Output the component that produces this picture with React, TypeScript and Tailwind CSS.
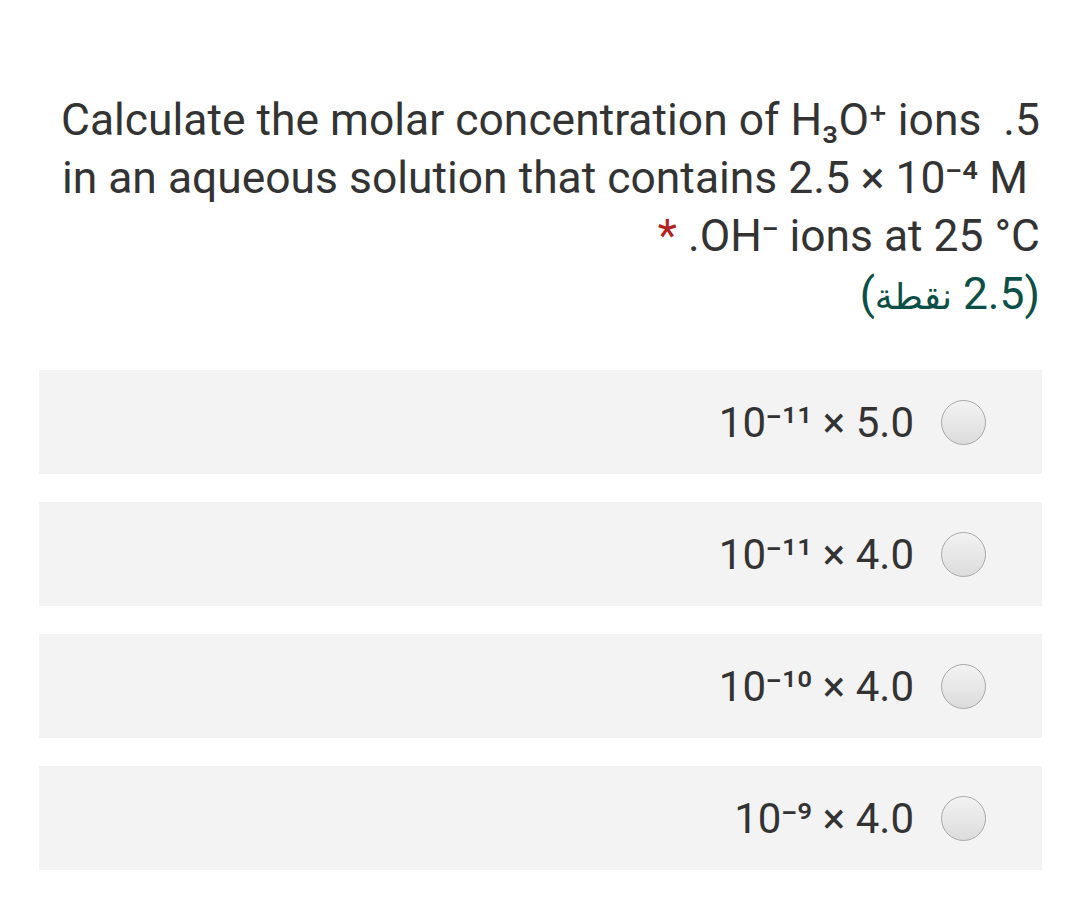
import React from 'react'

const OPTIONS = [
  { base: '10', exp: '⁻¹¹', rest: ' × 5.0' },
  { base: '10', exp: '⁻¹¹', rest: ' × 4.0' },
  { base: '10', exp: '⁻¹⁰', rest: ' × 4.0' },
  { base: '10', exp: '⁻⁹', rest: ' × 4.0' },
]

function Radio() {
  return (
    <span className="block w-[45px] h-[45px] rounded-full border border-[#a9a9a9] bg-gradient-to-b from-[#f3f3f3] to-[#dcdcdc] shrink-0" />
  )
}

export default function App() {
  return (
    <div
      className="bg-white w-[1080px] h-[897px] text-[#333333]"
      style={{ fontFamily: 'Roboto, "DejaVu Sans", sans-serif' }}
    >
      <div className="pt-[91px] pl-[39px] pr-[38px]">
        <div className="text-right text-[44.4px] leading-[58px] pr-[2px] whitespace-nowrap">
          <div>Calculate the molar concentration of H₃O⁺ ions&nbsp; .5</div>
          <div className="pr-[12px]">in an aqueous solution that contains 2.5 × 10⁻⁴ M</div>
          <div>
            <span className="text-[#b3211f]">*</span> .OH⁻ ions at 25 °C
          </div>
          <div className="text-[#0b4f47] h-[58px]" dir="rtl">
            (2.5 <span className="text-[36px] leading-none">نقطة</span>)
          </div>
        </div>

        <div className="mt-[47px] flex flex-col gap-[28px]">
          {OPTIONS.map((o, i) => (
            <div
              key={i}
              className="h-[104px] bg-[#f3f3f3] flex items-center justify-end gap-[27px] pr-[56px] text-[42px]"
            >
              <span className="whitespace-nowrap">
                {o.base}
                {o.exp}
                {o.rest}
              </span>
              <Radio />
            </div>
          ))}
        </div>
      </div>
    </div>
  )
}
